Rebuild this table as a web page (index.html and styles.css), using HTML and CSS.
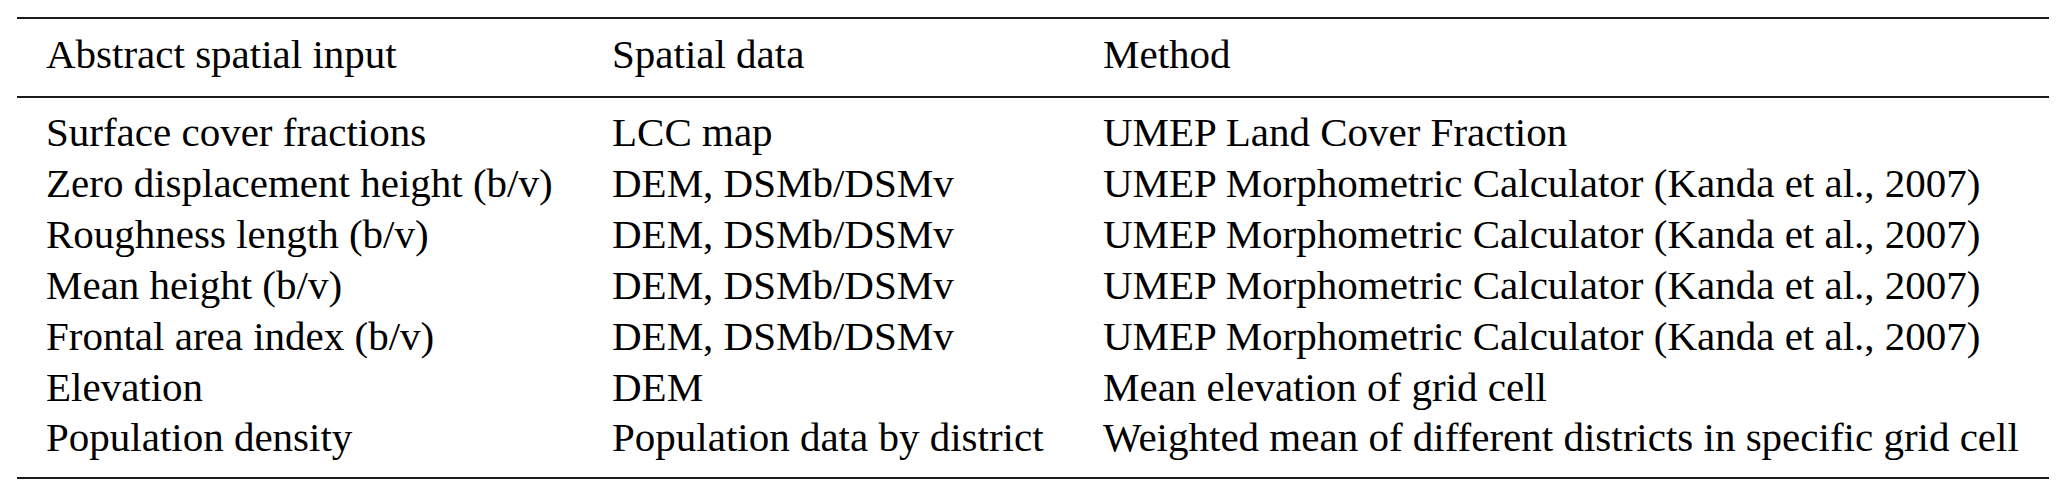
FILE: index.html
```html
<!DOCTYPE html>
<html>
<head>
<meta charset="utf-8">
<link rel="stylesheet" href="styles.css">
</head>
<body>
<div class="table">
  <div class="head grid">
    <div>Abstract spatial input</div>
    <div>Spatial data</div>
    <div>Method</div>
  </div>
  <div class="body grid">
    <div>Surface cover fractions</div><div>LCC map</div><div>UMEP Land Cover Fraction</div>
    <div>Zero displacement height (b/v)</div><div>DEM, DSMb/DSMv</div><div>UMEP Morphometric Calculator (Kanda et al., 2007)</div>
    <div>Roughness length (b/v)</div><div>DEM, DSMb/DSMv</div><div>UMEP Morphometric Calculator (Kanda et al., 2007)</div>
    <div>Mean height (b/v)</div><div>DEM, DSMb/DSMv</div><div>UMEP Morphometric Calculator (Kanda et al., 2007)</div>
    <div>Frontal area index (b/v)</div><div>DEM, DSMb/DSMv</div><div>UMEP Morphometric Calculator (Kanda et al., 2007)</div>
    <div>Elevation</div><div>DEM</div><div>Mean elevation of grid cell</div>
    <div>Population density</div><div>Population data by district</div><div>Weighted mean of different districts in specific grid cell</div>
  </div>
</div>
</body>
</html>
```
FILE: styles.css
```css
html, body {
  margin: 0;
  padding: 0;
  background: #fff;
}
.table {
  margin: 17px 0 0 17px;
  width: 2032px;
  font-family: "Liberation Serif", "Times New Roman", serif;
  font-size: 41px;
  line-height: 50.83px;
  color: #000;
  border-top: 2px solid #1a1a1a;
  border-bottom: 2px solid #1a1a1a;
  white-space: nowrap;
}
.grid {
  display: grid;
  grid-template-columns: 566px 491px 1fr;
}
.head {
  padding: 10px 0 16.4px 29px;
  border-bottom: 2px solid #1a1a1a;
}
.body {
  padding: 9.2px 0 14px 29px;
}
```
